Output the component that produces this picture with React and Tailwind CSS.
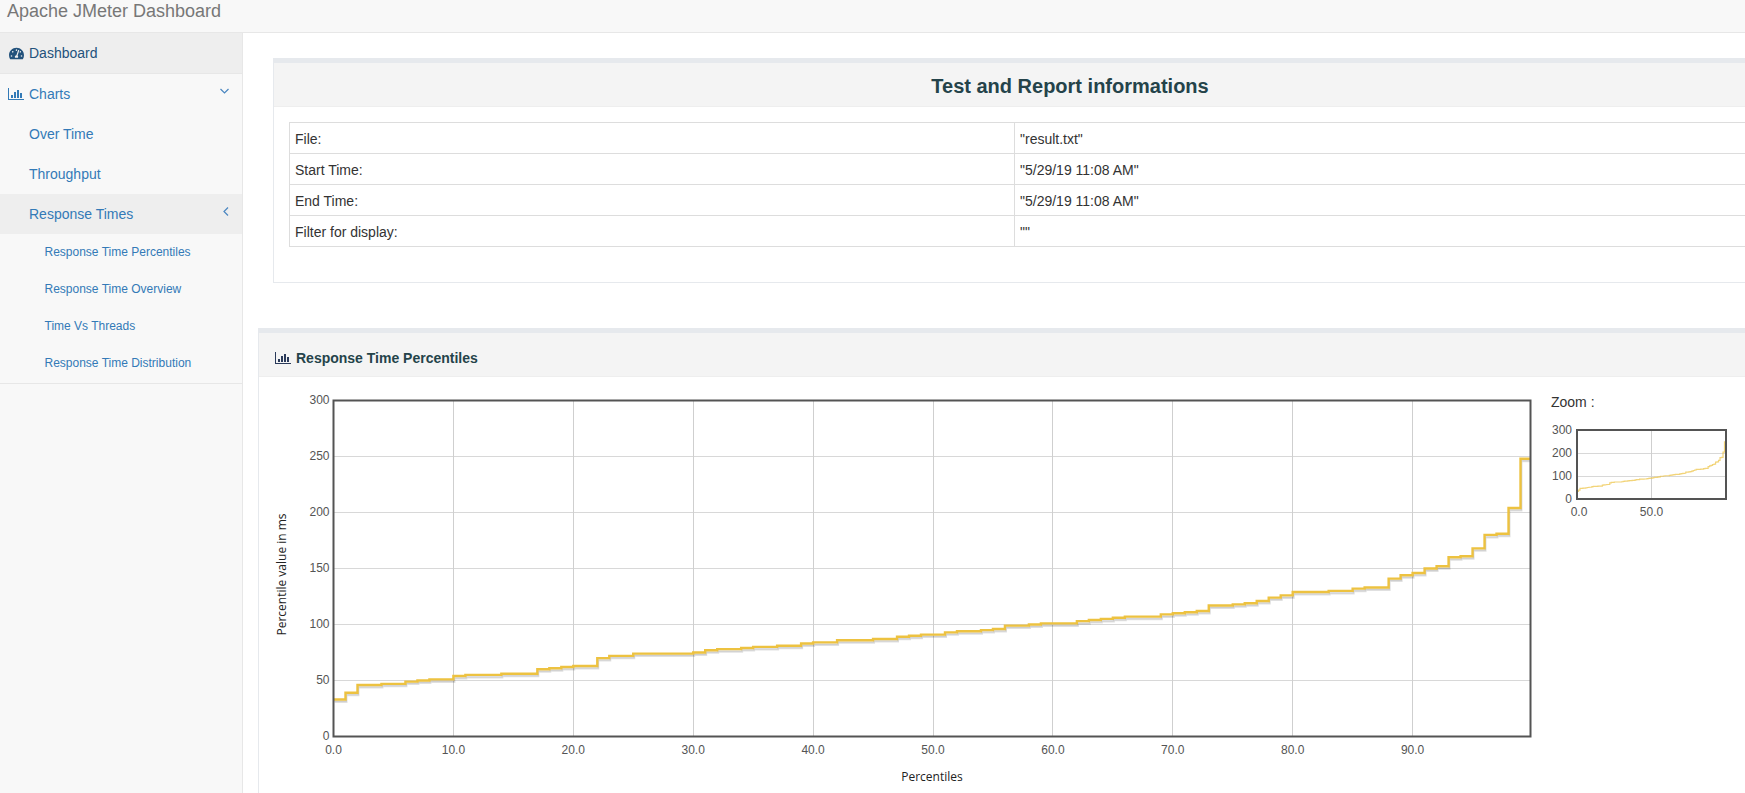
import React from "react";
import { FaTachometerAlt } from "react-icons/fa";

const D = [33,39,46,46,47,47,49,50,51,51,54,55,55,55,56,56,56,60,61,62,63,63,70,72,72,74,74,74,74,74,75,77,78,78,79,80,80,81,81,83,84,84,86,86,86,87,87,89,90,91,91,93,94,94,95,96,99,99,100,101,101,101,103,104,105,106,107,107,107,109,110,111,112,117,117,118,119,121,124,126,129,129,129,130,130,132,133,133,141,144,146,150,152,160,161,168,180,181,204,248];

function stepPts(x0, pxPer, y0, pyPer, dx = 0, dy = 0) {
  const p = [];
  D.forEach((v, i) => {
    const y = y0 - v * pyPer + dy;
    p.push(`${x0 + i * pxPer + dx},${y}`);
    p.push(`${x0 + (i + 1) * pxPer + dx},${y}`);
  });
  return p.join(" ");
}

function BarIcon({ color, className }) {
  return (
    <svg viewBox="0 0 16 12" className={className} fill={color}>
      <path d="M0 0h1v11h15v1H0z" />
      <rect x="3" y="7" width="2" height="3" />
      <rect x="6" y="4" width="2" height="6" />
      <rect x="9" y="2" width="2" height="8" />
      <rect x="12" y="5" width="2" height="5" />
    </svg>
  );
}

function MainChart() {
  const L = 74.5, T = 23.5;
  const W = 1197, H = 336;
  const xs = [0,10,20,30,40,50,60,70,80,90];
  const ys = [0,50,100,150,200,250,300];
  const px = 11.99, py = 1.12;
  const x0 = L, y0 = T + H;
  return (
    <svg width="1320" height="417" className="block">
      {ys.slice(1, 6).map((v) => {
        const y = Math.floor(y0 - v * py) + 0.5;
        return <line key={v} x1={L} x2={L + W} y1={y} y2={y} stroke="#d8d8d8" />;
      })}
      {xs.slice(1).map((v) => {
        const x = Math.floor(x0 + v * px) + 0.5;
        return <line key={v} x1={x} x2={x} y1={T} y2={y0} stroke="#cfcfcf" />;
      })}
      <clipPath id="mc"><rect x={L} y={T} width={W} height={H} /></clipPath>
      <g clipPath="url(#mc)" fill="none">
        <polyline points={stepPts(x0, px, y0, py, 1, 2.5)} stroke="#000" strokeOpacity="0.12" strokeWidth="2" />
        <polyline points={stepPts(x0, px, y0, py, 0.5, 1.5)} stroke="#000" strokeOpacity="0.08" strokeWidth="2" />
        <polyline points={stepPts(x0, px, y0, py)} stroke="#edc240" strokeWidth="2.4" />
      </g>
      <rect x={L} y={T} width={W} height={H} fill="none" stroke="#545454" strokeWidth="2" />
      <g fontFamily="'Liberation Sans', Arial, sans-serif" fontSize="12" fontWeight="400" fill="#545454">
        {xs.map((v) => (
          <text key={v} x={x0 + v * px} y={y0 + 17} textAnchor="middle">{v.toFixed(1)}</text>
        ))}
        {ys.map((v) => (
          <text key={v} x={L - 4} y={y0 - v * py + 3} textAnchor="end">{v}</text>
        ))}
      </g>
      <g fontFamily="'Open Sans', sans-serif" fontSize="12" fill="#222">
        <text x={x0 + 598.5} y={y0 + 44} textAnchor="middle">Percentiles</text>
        <text transform={`translate(${L - 48} ${T + 174}) rotate(-90)`} textAnchor="middle">Percentile value in ms</text>
      </g>
    </svg>
  );
}

function Overview() {
  const L = 30, T = 6, W = 149, H = 69;
  const py = H / 300;
  const px = W / 100;
  return (
    <svg width="190" height="100" className="block">
      <line x1={L} x2={L + W} y1={Math.floor(T + H - 100 * py) + 0.5} y2={Math.floor(T + H - 100 * py) + 0.5} stroke="#d8d8d8" />
      <line x1={L} x2={L + W} y1={Math.floor(T + H - 200 * py) + 0.5} y2={Math.floor(T + H - 200 * py) + 0.5} stroke="#d8d8d8" />
      <line x1={Math.floor(L + 50 * px) + 0.5} x2={Math.floor(L + 50 * px) + 0.5} y1={T} y2={T + H} stroke="#cfcfcf" />
      <polyline points={stepPts(L, px, T + H, py)} fill="none" stroke="#edc240" strokeOpacity="0.7" strokeWidth="1.2" />
      <rect x={L} y={T} width={W} height={H} fill="none" stroke="#545454" strokeWidth="2" />
      <g fontFamily="'Liberation Sans', Arial, sans-serif" fontSize="12" fill="#545454">
        {[0, 100, 200, 300].map((v) => (
          <text key={v} x={L - 5} y={T + H - v * py + 4} textAnchor="end">{v}</text>
        ))}
        <text x={L + 2} y={T + H + 17} textAnchor="middle">0.0</text>
        <text x={L + 50 * px} y={T + H + 17} textAnchor="middle">50.0</text>
      </g>
    </svg>
  );
}

function NavRow({ icon, label, active, right, dark }) {
  return (
    <a className={`flex items-center h-10 pl-[29px] pr-[15px] text-sm ${active ? "bg-[#eeeeee]" : ""} ${dark ? "text-[#23527c]" : "text-[#337ab7]"}`}>
      {icon}
      <span>{label}</span>
      {right}
    </a>
  );
}

const rows = [
  ["File:", '"result.txt"'],
  ["Start Time:", '"5/29/19 11:08 AM"'],
  ["End Time:", '"5/29/19 11:08 AM"'],
  ["Filter for display:", '""'],
];

export default function App() {
  return (
    <div className="h-[793px] w-[1745px] overflow-hidden bg-white font-['Liberation_Sans',Arial,sans-serif] text-sm text-[#333333] flex flex-col">
      <header className="h-[33px] shrink-0 bg-[#f8f8f8] border-b border-[#e7e7e7] flex items-end pb-[11px] pl-[7px]">
        <span className="text-[18px] leading-[20px] text-[#777777]">Apache JMeter Dashboard</span>
      </header>
      <div className="flex flex-1 min-h-0">
        <aside className="w-[243px] shrink-0 bg-[#f8f8f8] border-r border-[#e7e7e7]">
          <div className="border-b border-[#e7e7e7]">
            <NavRow active dark icon={<FaTachometerAlt className="w-[15px] h-[15px] mr-[5px] -ml-[20px]" />} label="Dashboard" />
          </div>
          <div className="border-b border-[#e7e7e7]">
            <NavRow
              icon={<BarIcon color="#337ab7" className="w-[16px] h-[12px] mr-[5px] -ml-[21px]" />}
              label="Charts"
              right={
                <svg viewBox="0 0 9 6" className="ml-auto w-[9px] h-[6px] -mt-[6px] -mr-[2px]" fill="none" stroke="#4a86c0" strokeWidth="1.2">
                  <path d="M0.5 1l4 4 4-4" />
                </svg>
              }
            />
            <NavRow label="Over Time" />
            <NavRow label="Throughput" />
            <NavRow
              active
              label="Response Times"
              right={
                <svg viewBox="0 0 6 9" className="ml-auto w-[6px] h-[9px] -mt-[6px] -mr-[2px]" fill="none" stroke="#4a86c0" strokeWidth="1.2">
                  <path d="M5 0.5l-4 4 4 4" />
                </svg>
              }
            />
            <div className="pl-[44.5px] text-xs text-[#337ab7] pb-[1px]">
              <div className="h-[37px] pb-[2px] flex items-center">Response Time Percentiles</div>
              <div className="h-[37px] pb-[2px] flex items-center">Response Time Overview</div>
              <div className="h-[37px] pb-[2px] flex items-center">Time Vs Threads</div>
              <div className="h-[37px] pb-[2px] flex items-center">Response Time Distribution</div>
            </div>
          </div>
        </aside>
        <main className="flex-1 min-w-0 pl-[15px] pt-[25px]">
          <section className="ml-[15px] w-[1594px] h-[225px] border border-[#e6e9ed] border-t-[5px]">
            <h2 className="h-[44px] pt-[3px] bg-[#f4f4f4] border-b border-[#eeeeee] flex items-center justify-center text-[20px] font-bold text-[#24434a]">
              Test and Report informations
            </h2>
            <div className="pl-[15px] pt-[15px]">
              <table className="w-[1560px] border-collapse border border-[#dddddd] table-fixed">
                <tbody>
                  {rows.map(([a, b], i) => (
                    <tr key={i} className="h-[31px]">
                      <td className="border border-[#dddddd] px-[5px] pt-[2px] pb-0 w-[725px]">{a}</td>
                      <td className="border border-[#dddddd] px-[5px] pt-[2px] pb-0">{b}</td>
                    </tr>
                  ))}
                </tbody>
              </table>
            </div>
          </section>
          <section className="mt-[45px] w-[1600px] border border-[#e6e9ed] border-t-[5px] border-b-0">
            <h2 className="h-[44px] pt-[7px] bg-[#f4f4f4] border-b border-[#eeeeee] flex items-center pl-[16px] text-sm font-bold text-[#24434a]">
              <BarIcon color="#2a3a5a" className="w-[16px] h-[12px] mr-[5px]" />
              Response Time Percentiles
            </h2>
            <div className="flex">
              <MainChart />
              <div className="-ml-[28px]">
                <div className="h-[36px] pt-[15px] text-[14px] leading-[20px] text-[#333333]">Zoom :</div>
                <div className="-ml-[4px] pt-[11px]">
                  <Overview />
                </div>
              </div>
            </div>
          </section>
        </main>
      </div>
    </div>
  );
}
